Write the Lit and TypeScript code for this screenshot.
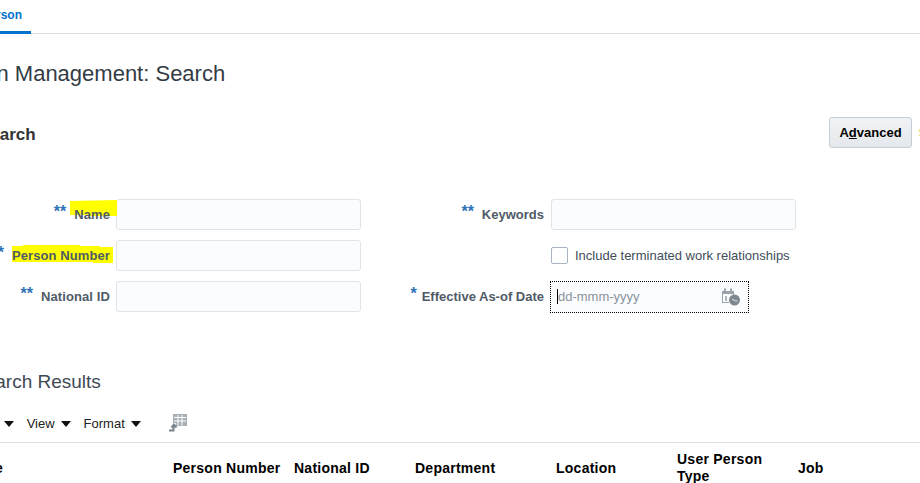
import { LitElement, html, css } from "lit";
import { customElement } from "lit/decorators.js";

@customElement("app-root")
export class AppRoot extends LitElement {
  static styles = css`
    :host { display: block; width: 920px; height: 483px; overflow: hidden; background: #fff; font-family: "Liberation Sans", Arial, sans-serif; color: #333; position: relative; }
    .page { margin-left: -100px; width: 1120px; }
    .tabs { height: 33px; border-bottom: 1px solid #d6dfe6; display: flex; align-items: flex-start; padding-left: 64px; }
    .tab { border-bottom: 3px solid #0572ce; margin-bottom: -2px; padding: 0 9px 0 0; width: 58px; height: 31px; color: #0572ce; font-size: 12px; font-weight: bold; line-height: 31px; text-align: right; }
    h1 { margin: 26px 0 0 39px; font-weight: normal; font-size: 22px; line-height: 28px; color: #333c45; }
    .search-head { display: flex; justify-content: space-between; align-items: center; margin-top: 31px; height: 32px; padding-left: 79px; }
    h2 { margin: 0; font-size: 17px; font-weight: bold; color: #333; }
    .head-right { display: flex; align-items: center; gap: 6px; margin-right: 100px; width: 91px; margin-bottom: 6px; }
    .btn { box-sizing: border-box; flex: none; height: 31px; width: 83px; border: 1px solid #c4ced7; border-radius: 3px; background: linear-gradient(#f1f3f5, #e4e8ec); font: bold 13px "Liberation Sans", Arial, sans-serif; color: #000; padding: 0; }
    .btn u { text-underline-offset: 1px; }
    .peek { color: #f3e3a0; font-size: 13px; font-weight: bold; }
    .form { display: grid; grid-template-columns: 216px 245px 190px 245px; grid-auto-rows: 31px; row-gap: 10px; margin-top: 48px; }
    .lab { display: flex; justify-content: flex-end; align-items: center; padding-right: 6px; font-size: 13px; font-weight: bold; color: #4f5b67; position: relative; white-space: nowrap; letter-spacing: .1px; }
    .lab.r { padding-right: 7px; letter-spacing: 0; }
    .star { color: #2f72b5; font-size: 16px; margin-right: 8px; position: relative; top: -3px; letter-spacing: 0; }
    .star.tight { margin-right: 5px; }
    .txt { position: relative; }
    .hl { position: absolute; overflow: visible; }
    .hl-name { left: -4px; top: -7px; }
    .hl-person { left: 0; top: -3px; }
    .inp { box-sizing: border-box; height: 31px; width: 245px; border: 1px solid #dfe4ea; border-radius: 3px; background: #fbfcfe; }
    .check { display: flex; align-items: center; gap: 7px; font-size: 13px; color: #414d59; white-space: nowrap; }
    .box { box-sizing: border-box; width: 17px; height: 17px; border: 1px solid #a9b4bf; border-radius: 2px; background: #fff; }
    .date { box-sizing: border-box; width: 199px; height: 32px; margin-left: -1px; border: 1px dotted #000; background: #fbfcfe; display: flex; align-items: center; justify-content: space-between; padding: 0 7px 1px 6px; font-size: 13px; color: #8a939c; }
    .date span { border-left: 1px solid #000; line-height: 15px; }
    .results { margin: 57px 0 0 72px; font-size: 19px; font-weight: normal; line-height: 26px; color: #3f4a55; }
    .tools { display: flex; align-items: center; height: 22px; margin-top: 17px; padding-left: 55px; font-size: 13px; color: #222; gap: 13px; }
    .tool { display: flex; align-items: center; gap: 6px; }
    .tri { width: 0; height: 0; border-left: 5px solid transparent; border-right: 5px solid transparent; border-top: 6px solid #111; margin-top: 1px; }
    .grid-ico { margin-left: 14px; }
    .thead { display: grid; grid-template-columns: 273px 121px 121px 141px 121px 121px 121px; border-top: 1px solid #d6dfe6; margin-top: 8px; height: 50px; font-size: 14px; letter-spacing: .25px; font-weight: bold; color: #000; align-items: center; }
    .thead div { line-height: 17px; padding-right: 12px; }
    .thead .first { text-align: right; padding-right: 170px; }
  `;

  render() {
    const req = (s: string, tight = false) => html`<span class="star ${tight ? "tight" : ""}">${s}</span>`;
    return html`<div class="page">
      <div class="tabs"><div class="tab">Person</div></div>
      <h1>Person Management: Search</h1>
      <div class="search-head"><h2>Search</h2><div class="head-right"><button class="btn">A<u>d</u>vanced</button><span class="peek">Save</span></div></div>
      <div class="form">
        <div class="lab">${req("**")}<span class="txt"><svg class="hl hl-name" width="47" height="17" viewBox="0 0 47 17"><path d="M0 1L47 0V16H16V15H0Z" fill="#ffff00"/></svg><span class="txt">Name</span></span></div>
        <div class="inp"></div>
        <div class="lab r">${req("**")}Keywords</div>
        <div class="inp"></div>

        <div class="lab">${req("**")}<span class="txt"><svg class="hl hl-person" width="102" height="19" viewBox="0 0 102 19"><path d="M0 1H11V0H68V1H88V2H101V18H81V17H0Z" fill="#ffff00"/></svg><span class="txt">Person Number</span></span></div>
        <div class="inp"></div>
        <div></div>
        <div class="check"><div class="box"></div>Include terminated work relationships</div>

        <div class="lab">${req("**")}National ID</div>
        <div class="inp"></div>
        <div class="lab r">${req("*", true)}Effective As-of Date</div>
        <div class="date"><span>dd-mmm-yyyy</span>
          <svg width="20" height="18" viewBox="0 0 20 18">
            <path d="M1 3H13V9H12V6H2V14H8V15H1Z" fill="#9aa3ab"/>
            <rect x="3" y="0.5" width="2" height="4" fill="#9aa3ab"/><rect x="9" y="0.5" width="2" height="4" fill="#9aa3ab"/>
            <rect x="4" y="8" width="2" height="5" fill="#b0b7be"/>
            <circle cx="13.5" cy="12" r="5.5" fill="#7f8890"/><path d="M11 11L14.5 13H16.5" stroke="#e4e7ea" fill="none"/>
          </svg>
        </div>
      </div>
      <div class="results">Search Results</div>
      <div class="tools">
        <div class="tool">Actions<span class="tri"></span></div>
        <div class="tool">View<span class="tri"></span></div>
        <div class="tool">Format<span class="tri"></span></div>
        <svg class="grid-ico" width="20" height="20" viewBox="0 0 20 20">
          <path d="M4 1H19V13H8V10H5V1Z" fill="#a8afb6"/>
          <path d="M6 4.5H18M6 8H18M10 2V12.5M14 2V12.5" stroke="#fff" fill="none"/>
          <path d="M1 17.5H5.5V13M3.5 14.5L6 11.5L8.5 14.5" stroke="#7b838b" stroke-width="2" fill="none"/>
        </svg>
      </div>
      <div class="thead">
        <div class="first">Name</div>
        <div>Person Number</div><div>National ID</div><div>Department</div><div>Location</div><div>User Person Type</div><div>Job</div>
      </div>
    </div>`;
  }
}
